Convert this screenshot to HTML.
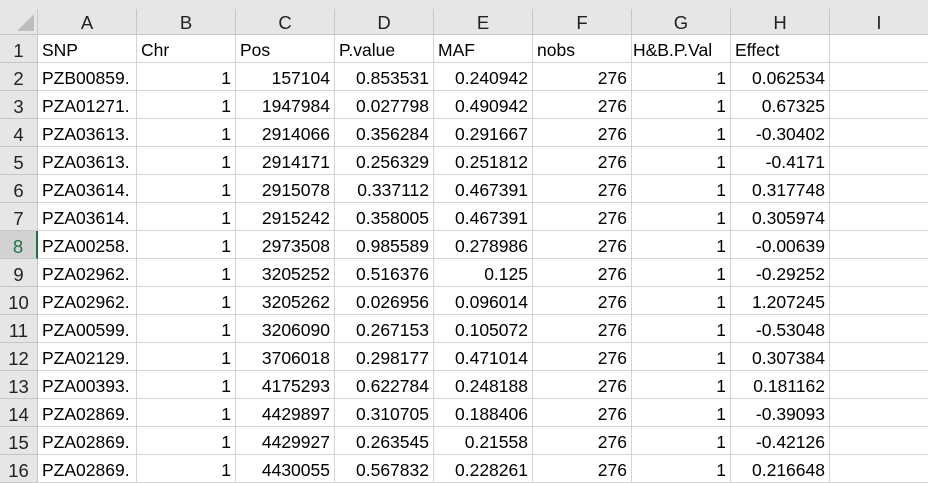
<!DOCTYPE html>
<html><head><meta charset="utf-8"><style>
body{margin:0;width:928px;height:482px;overflow:hidden;background:#fff;font-family:"Liberation Sans","Noto Sans CJK SC",sans-serif;font-size:17.5px;color:#000;position:relative}
.c{position:absolute;box-sizing:border-box;border-right:1px solid #d4d4d4;border-bottom:1px solid #d4d4d4;height:28px;line-height:31px;padding:0 4px;white-space:nowrap;overflow:hidden}
.r{text-align:right}
.h{background:#e6e6e6;border-color:#c6c6c6;text-align:center;color:#222;font-size:18.5px}
</style></head><body>
<div style="position:absolute;left:0;top:0;width:928px;height:9px;background:#e6e6e6"></div>
<div id="g"></div>
<script>
const cols=[38,137,236,335,434,533,632,731,830,929];
const letters="ABCDEFGHI";
const data=[
["SNP","Chr","Pos","P.value","MAF","nobs","H&B.P.Val","Effect"],
["PZB00859.",1,157104,"0.853531","0.240942",276,1,"0.062534"],
["PZA01271.",1,1947984,"0.027798","0.490942",276,1,"0.67325"],
["PZA03613.",1,2914066,"0.356284","0.291667",276,1,"-0.30402"],
["PZA03613.",1,2914171,"0.256329","0.251812",276,1,"-0.4171"],
["PZA03614.",1,2915078,"0.337112","0.467391",276,1,"0.317748"],
["PZA03614.",1,2915242,"0.358005","0.467391",276,1,"0.305974"],
["PZA00258.",1,2973508,"0.985589","0.278986",276,1,"-0.00639"],
["PZA02962.",1,3205252,"0.516376","0.125",276,1,"-0.29252"],
["PZA02962.",1,3205262,"0.026956","0.096014",276,1,"1.207245"],
["PZA00599.",1,3206090,"0.267153","0.105072",276,1,"-0.53048"],
["PZA02129.",1,3706018,"0.298177","0.471014",276,1,"0.307384"],
["PZA00393.",1,4175293,"0.622784","0.248188",276,1,"0.181162"],
["PZA02869.",1,4429897,"0.310705","0.188406",276,1,"-0.39093"],
["PZA02869.",1,4429927,"0.263545","0.21558",276,1,"-0.42126"],
["PZA02869.",1,4430055,"0.567832","0.228261",276,1,"0.216648"]];
let h='';
h+=`<div class="c h" style="left:0;top:9px;width:38px;height:26px"><svg width="38" height="26" style="position:absolute;left:0;top:0"><polygon points="34,5 34,22 17,22" fill="#bdbdbd"/></svg></div>`;
for(let j=0;j<9;j++)h+=`<div class="c h" style="left:${cols[j]}px;top:9px;width:${cols[j+1]-cols[j]}px;height:26px;line-height:28px">${letters[j]}</div>`;
for(let i=0;i<16;i++){const top=35+i*28;const sel=i==7;
h+=`<div class="c h" style="left:0;top:${top}px;width:38px;${sel?'background:#d2d2d2;color:#217346;border-right:2px solid #217346':''}">${i+1}</div>`;
for(let j=0;j<9;j++){let v=j<8?data[i][j]:'';let r=i>0&&j>0&&j<8;
v=String(v).replace('&','&amp;');
h+=`<div class="c${r?' r':''}" style="left:${cols[j]}px;top:${top}px;width:${cols[j+1]-cols[j]}px;${i==0&&j==6?'padding:0 1px;':''}">${v}</div>`;}}
document.getElementById('g').innerHTML=h;
</script>
</body></html>
